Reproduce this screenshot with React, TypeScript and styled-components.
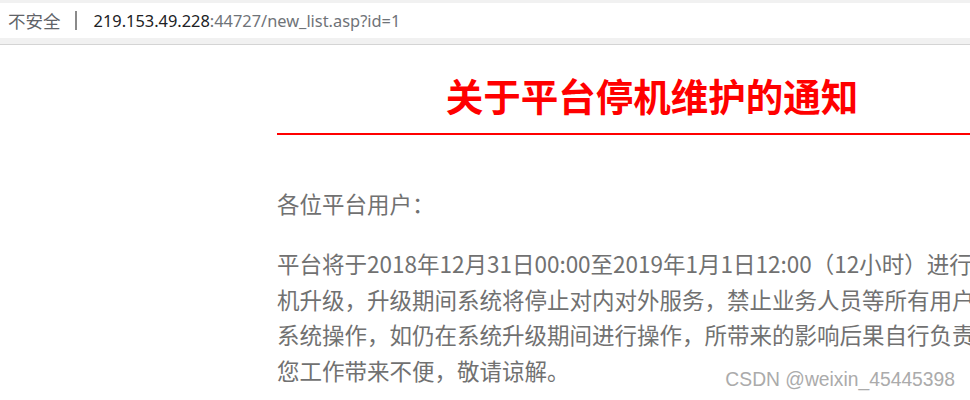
import React from "react";
import styled, { createGlobalStyle } from "styled-components";

const GlobalStyle = createGlobalStyle`
    html, body {
        margin: 0;
        padding: 0;
        background: #ffffff;
        overflow: hidden;
    }
    body {
        font-family: "Noto Sans CJK SC", "Noto Sans", sans-serif;
    }
`;

const notice = {
    title: "关于平台停机维护的通知",
    greeting: "各位平台用户：",
    lines: [
        "平台将于2018年12月31日00:00至2019年1月1日12:00（12小时）进行停",
        "机升级，升级期间系统将停止对内对外服务，禁止业务人员等所有用户进行",
        "系统操作，如仍在系统升级期间进行操作，所带来的影响后果自行负责，给",
        "您工作带来不便，敬请谅解。",
    ],
};

const App = () => {
    return (
        <Screen>
            <GlobalStyle />
            <Chrome>
                <TopStrip />
                <AddressBar>
                    <Insecure>不安全</Insecure>
                    <Divider />
                    <Url>
                        <Host>219.153.49.228</Host>
                        <Rest>:44727/new_list.asp?id=1</Rest>
                    </Url>
                </AddressBar>
                <BottomStrip />
            </Chrome>

            <Article>
                <Title>{notice.title}</Title>
                <Greeting>{notice.greeting}</Greeting>
                <Body>
                    {notice.lines.map((line) => (
                        <Line key={line}>{line}</Line>
                    ))}
                </Body>
            </Article>

            <Watermark>CSDN @weixin_45445398</Watermark>
        </Screen>
    );
};

export default App;

const Screen = styled.div`
    position: relative;
    width: 970px;
    height: 400px;
    overflow: hidden;
    background: #ffffff;
`;

const Chrome = styled.div`
    display: flex;
    flex-direction: column;
`;

const TopStrip = styled.div`
    height: 3px;
    background: #f1f1f1;
`;

const AddressBar = styled.div`
    height: 35px;
    display: flex;
    align-items: center;
    padding-left: 8px;
    background: #ffffff;
    font-family: "Noto Sans", "Noto Sans CJK SC", sans-serif;
    font-size: 16.4px;
`;

const Insecure = styled.span`
    font-family: "Noto Sans CJK SC", sans-serif;
    font-size: 17.5px;
    color: #5f6368;
`;

const Divider = styled.span`
    width: 2px;
    height: 19px;
    margin: 0 17px 0 14px;
    background: #8a8a8a;
`;

const Url = styled.span``;

const Host = styled.span`
    color: #202124;
`;

const Rest = styled.span`
    color: #6f7378;
`;

const BottomStrip = styled.div`
    height: 6px;
    background: #f1f1f1;
    border-bottom: 1px solid #d4d4d4;
`;

const Article = styled.div`
    margin-left: 277px;
    width: 750px;
`;

const Title = styled.h1`
    margin: 27px 0 0 0;
    padding-bottom: 16px;
    border-bottom: 2px solid #ff0000;
    text-align: center;
    color: #ff0000;
    font-size: 37.5px;
    line-height: 45px;
    font-weight: 700;
`;

const Greeting = styled.p`
    margin: 51px 0 0 0;
    font-size: 22.5px;
    line-height: 35.5px;
    color: #717171;
`;

const Body = styled.div`
    margin-top: 24.5px;
    font-size: 22.5px;
    line-height: 35.5px;
    color: #717171;
`;

const Line = styled.span`
    display: block;
    white-space: nowrap;
`;

const Watermark = styled.div`
    position: absolute;
    right: 15px;
    bottom: 9px;
    font-family: "Liberation Sans", Arial, sans-serif;
    font-size: 19.3px;
    color: #ababab;
    text-shadow: 0 0 1px #ffffff;
`;
